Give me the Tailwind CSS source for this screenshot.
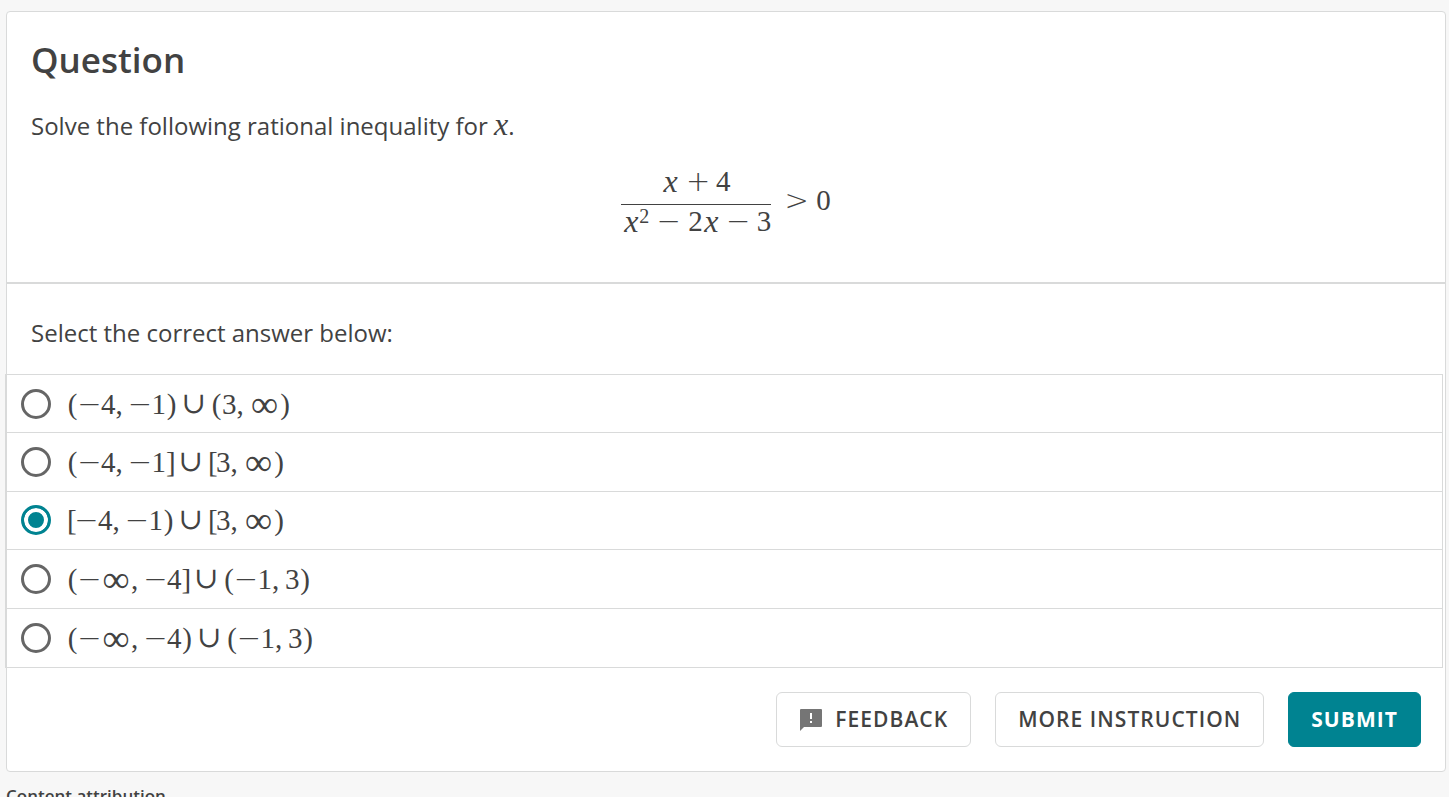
<!DOCTYPE html>
<html lang="en">
<head>
<meta charset="utf-8">
<meta name="viewport" content="width=device-width, initial-scale=1">
<title>Question</title>
<script src="https://cdn.jsdelivr.net/npm/@tailwindcss/browser@4"></script>
</head>
<body class="h-screen overflow-hidden bg-[#f7f7f7] pl-1.5 pr-[3px] pt-[11px] font-['Open_Sans',sans-serif] text-[#424242]">
<main class="rounded border border-[#d9dada] bg-white">
  <section class="px-6 pt-6 pb-10">
    <h1 class="text-[35px] font-semibold leading-[48px]">Question</h1>
    <p class="mt-6 text-2xl leading-[34px]">Solve the following rational inequality for <i class="font-['Liberation_Serif',serif] text-[32px] leading-none">x</i>.</p>
    <div class="mt-[22px] flex items-center justify-center font-['Liberation_Serif',serif] text-[29px] leading-[38px]">
      <div class="flex flex-col items-center">
        <div class="flex h-[39px] items-center pb-2">
          <i class="w-[17px] text-center text-[32px]">x</i><span class="mx-[7px] w-[23px] text-center font-['DejaVu_Sans',sans-serif] font-extralight">+</span><span>4</span>
        </div>
        <div class="flex h-[38px] items-center border-t border-[#424242] pb-1.5 pl-0.5">
          <i class="w-4 text-center text-[32px]">x</i><sup class="top-0 mb-2.5 text-[20px] leading-none">2</sup><span class="mx-2 flex w-[23px] justify-center font-['DejaVu_Sans',sans-serif] font-extralight">−</span><span>2</span><i class="w-[17px] text-center text-[32px]">x</i><span class="mx-[7px] flex w-[23px] justify-center font-['DejaVu_Sans',sans-serif] font-extralight">−</span><span>3</span>
        </div>
      </div>
      <span class="mr-2 ml-3.5 flex w-[23px] justify-center pb-2 font-['DejaVu_Sans',sans-serif] font-extralight">&gt;</span><span class="pb-2">0</span>
    </div>
  </section>
  <section class="border-t-2 border-[#d9dada]">
    <p id="prompt" class="px-6 pt-8 pb-6 text-2xl leading-[34px]">Select the correct answer below:</p>
    <div id="options" role="radiogroup" aria-labelledby="prompt" class="mr-0.5 -ml-0.5 grid min-h-[294px] auto-rows-fr divide-y divide-[#d9dada] border border-[#d9dada]"></div>
  </section>
  <div class="flex flex-wrap justify-end gap-6 p-6 text-[21px] font-semibold leading-[53px]">
    <button type="button" class="flex items-center gap-3 rounded-md border border-[#d9dada] px-[22px] tracking-wider">
      <svg class="size-6" viewBox="0 0 24 24" aria-hidden="true"><path fill="#757575" fill-rule="evenodd" d="M2 1h20a1 1 0 0 1 1 1v16a1 1 0 0 1-1 1H5l-4 4V2a1 1 0 0 1 1-1ZM11 5v6h2V5ZM11 13v2h2v-2Z"/></svg>
      FEEDBACK</button>
    <button type="button" class="rounded-md border border-[#d9dada] px-[22px] tracking-wider">MORE INSTRUCTION</button>
    <button type="button" class="rounded-md border border-[#008391] bg-[#008391] px-[22px] font-bold tracking-wider text-white">SUBMIT</button>
  </div>
</main>
<footer class="mt-3 text-[17px] font-semibold leading-6">Content attribution</footer>
<script>
  const answers = ['(−4,−1)∪(3,∞)', '(−4,−1]∪[3,∞)', '[−4,−1)∪[3,∞)', '(−∞,−4]∪(−1,3)', '(−∞,−4)∪(−1,3)'];
  const atom = {
    '−': "flex w-[23px] justify-center font-['DejaVu_Sans',sans-serif] font-extralight",
    '∪': "mx-[7px] flex w-5 justify-center font-['DejaVu_Math_TeX_Gyre',serif] text-[29px]",
    '∞': "flex w-[30px] justify-center text-[38px]",
    ',': 'w-[13px]',
    '(': 'w-[11px] text-center', ')': 'w-[11px] text-center',
    '[': 'w-2 text-center', ']': 'w-2 text-center'
  };
  document.getElementById('options').innerHTML = answers.map((a, i) =>
    `<label class="flex items-center pl-[15px]"><input type="radio" name="answer" class="mr-4 size-[30px] appearance-none rounded-full border-3 border-[#666] bg-white checked:border-[#008391] checked:bg-[#008391] checked:shadow-[inset_0_0_0_4px_white]" ${i === 2 ? 'checked' : ''}><span class="flex items-center font-['Liberation_Serif',serif] text-[29px] leading-9">${[...a].map(c => `<span class="${atom[c] || ''}">${c}</span>`).join('')}</span></label>`).join('');
</script>
</body>
</html>
